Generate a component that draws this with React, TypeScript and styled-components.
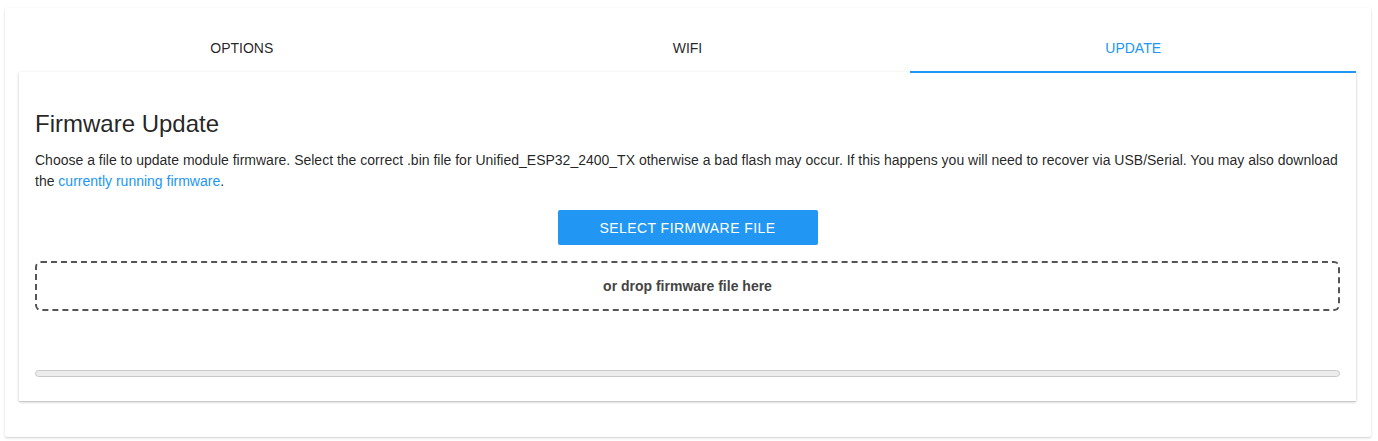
import React, { useState } from "react";
import styled, { createGlobalStyle } from "styled-components";

const Global = createGlobalStyle`
  html, body { margin: 0; padding: 0; background: #ffffff; }
  body { font-family: "Liberation Sans", Arial, sans-serif; color: rgba(0,0,0,0.87); }
  * { box-sizing: border-box; }
`;

const Page = styled.div`
  padding: 8px 7px 4px 5px;
`;

const OuterCard = styled.div`
  background: #fff;
  border-radius: 2px;
  box-shadow: 0 1px 3px rgba(0,0,0,0.14), 0 1px 1px rgba(0,0,0,0.06);
  padding: 15px 15px 36px 14px;
`;

const TabBar = styled.div`
  display: grid;
  grid-template-columns: repeat(3, 1fr);
  height: 49px;
`;

const Tab = styled.button<{ $active?: boolean }>`
  font-family: "Liberation Sans", Arial, sans-serif;
  font-size: 14px;
  text-transform: uppercase;
  background: none;
  border: none;
  padding: 2px 0 0;
  cursor: pointer;
  color: ${(p) => (p.$active ? "#2196f3" : "rgba(0,0,0,0.87)")};
  border-bottom: 2px solid ${(p) => (p.$active ? "#2196f3" : "transparent")};
  margin-bottom: -1px;
  position: relative;
  z-index: 1;
`;

const InnerCard = styled.div`
  background: #fff;
  box-shadow: 0 1px 3px rgba(0,0,0,0.2), 0 1px 1px rgba(0,0,0,0.1);
  padding: 36px 16px 24px;
  display: flex;
  flex-direction: column;
`;

const Heading = styled.h2`
  margin: 0 0 10px;
  font-size: 24px;
  line-height: 32px;
  font-weight: 400;
  color: rgba(0,0,0,0.87);
`;

const Paragraph = styled.p`
  margin: 0;
  font-size: 14px;
  line-height: 21px;
`;

const Link = styled.a`
  color: #2196f3;
  text-decoration: none;
`;

const Button = styled.button`
  align-self: center;
  margin-top: 18px;
  width: 260px;
  height: 35px;
  background: #2196f3;
  color: #fff;
  border: none;
  border-radius: 2px;
  font-family: "Liberation Sans", Arial, sans-serif;
  font-size: 14px;
  letter-spacing: 0.45px;
  text-transform: uppercase;
  cursor: pointer;
`;

const DropZone = styled.div`
  margin-top: 16px;
  height: 50px;
  border: 2px dashed #555;
  border-radius: 6px;
  display: flex;
  align-items: center;
  justify-content: center;
  font-size: 14px;
  font-weight: 700;
  color: #444;
`;

const Progress = styled.div`
  margin-top: 59px;
  height: 7px;
  border: 1px solid #c8c8c8;
  background: #ececec;
  border-radius: 4px;
`;

export default function App() {
  const [tab, setTab] = useState(2);
  const tabs = ["Options", "WiFi", "Update"];
  return (
    <>
      <Global />
      <Page>
        <OuterCard>
          <TabBar>
            {tabs.map((t, i) => (
              <Tab key={t} $active={i === tab} onClick={() => setTab(i)}>
                {t}
              </Tab>
            ))}
          </TabBar>
          <InnerCard>
            <Heading>Firmware Update</Heading>
            <Paragraph>
              Choose a file to update module firmware. Select the correct .bin file for Unified_ESP32_2400_TX otherwise a bad flash may occur. If this happens you will need to recover via USB/Serial. You may also download the{" "}
              <Link href="#">currently running firmware</Link>.
            </Paragraph>
            <Button>Select firmware file</Button>
            <DropZone>or drop firmware file here</DropZone>
            <Progress />
          </InnerCard>
        </OuterCard>
      </Page>
    </>
  );
}
